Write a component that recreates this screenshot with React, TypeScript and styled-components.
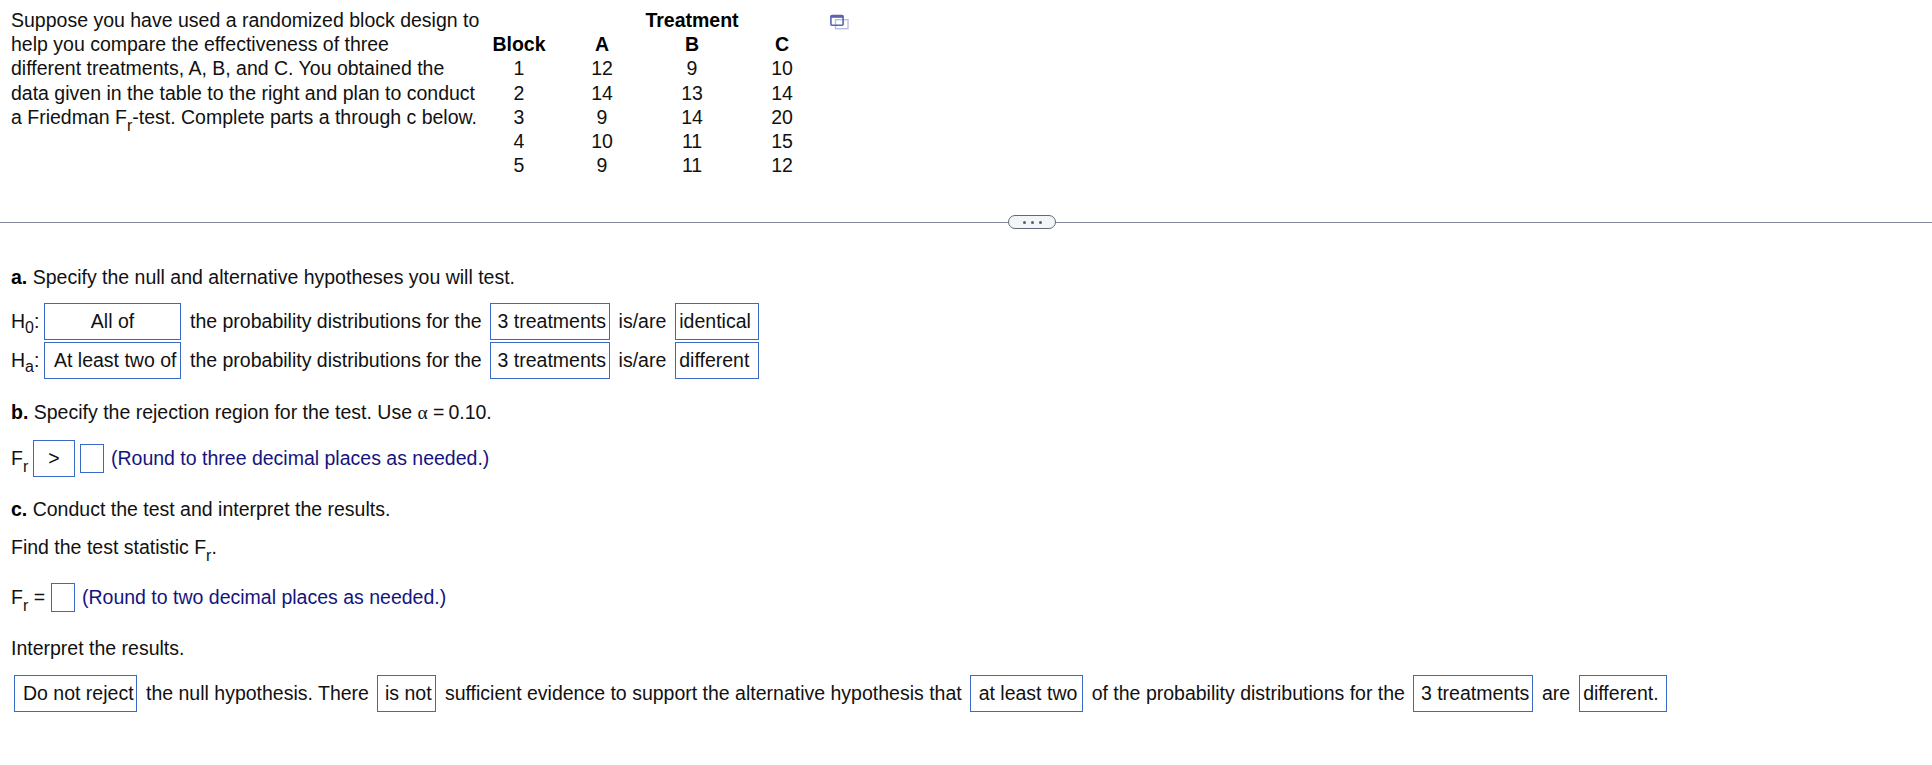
import React from 'react'
import styled, { createGlobalStyle } from 'styled-components'

const GlobalStyle = createGlobalStyle`
  html, body {
    margin: 0;
    padding: 0;
    background: #fff;
  }
  body {
    font-family: "Liberation Sans", Arial, sans-serif;
    font-size: 19.5px;
    color: #111;
  }
`

const Page = styled.div`
  width: 1932px;
  height: 765px;
  overflow: hidden;
`

const Top = styled.div`
  display: flex;
  align-items: flex-start;
  height: 215px;
  padding: 8px 0 0 11px;
  box-sizing: border-box;
`

const Intro = styled.div`
  width: 470px;
  flex: none;
  line-height: 24.2px;
  white-space: nowrap;
`

const Table = styled.div`
  display: grid;
  grid-template-columns: 76px 90px 90px 90px;
  grid-auto-rows: 24.2px;
  line-height: 24.2px;
  text-align: center;
`

const Head = styled.div<{ $span?: number; $start?: number }>`
  font-weight: bold;
  color: #000;
  ${(p) => p.$start && `grid-column: ${p.$start} / span ${p.$span || 1};`}
`

const WindowIcon = styled.svg`
  margin: 6px 0 0 3px;
  flex: none;
`

const Divider = styled.div`
  display: flex;
  align-items: center;
  height: 14px;
`

const Rule = styled.div<{ $w?: number }>`
  height: 1px;
  background: #858a9e;
  ${(p) => (p.$w ? `width: ${p.$w}px;` : 'flex: 1;')}
`

const Pill = styled.div`
  display: flex;
  align-items: center;
  justify-content: center;
  gap: 5px;
  width: 48px;
  height: 14px;
  box-sizing: border-box;
  border: 1px solid #5f6b7a;
  border-radius: 7px;
  background: #f3f5f8;
`

const Dot = styled.span`
  width: 3px;
  height: 3px;
  border-radius: 50%;
  background: #555f6e;
`

const Body = styled.div`
  padding: 0 0 0 11px;
`

const Line = styled.div<{ $top: number }>`
  margin-top: ${(p) => p.$top}px;
  line-height: 24px;
`

const Row = styled.div<{ $top: number; $h?: number }>`
  display: flex;
  align-items: center;
  height: ${(p) => p.$h || 37}px;
  margin-top: ${(p) => p.$top}px;
  white-space: pre;
`

const Part = styled.b`
  color: #000;
`

const Sub = styled.sub<{ $drop?: number }>`
  font-size: 16px;
  line-height: 0;
  vertical-align: -${(p) => p.$drop || 7}px;
`

const Greek = styled.span`
  font-family: "Liberation Serif", "Times New Roman", serif;
`

const Symbol = styled.span<{ $w: number }>`
  display: inline-block;
  width: ${(p) => p.$w}px;
  flex: none;
`

const Answer = styled.span<{ $w: number; $pad?: number; $center?: boolean; $left?: number; $right?: number }>`
  display: inline-flex;
  align-items: center;
  justify-content: ${(p) => (p.$center ? 'center' : 'flex-start')};
  flex: none;
  box-sizing: border-box;
  width: ${(p) => p.$w}px;
  height: 37px;
  padding-left: ${(p) => p.$pad || 0}px;
  margin-left: ${(p) => p.$left || 0}px;
  margin-right: ${(p) => p.$right || 0}px;
  border: 1px solid #3b69c6;
`

const Blank = styled.span<{ $left?: number; $right?: number }>`
  display: inline-block;
  flex: none;
  box-sizing: border-box;
  width: 24px;
  height: 29px;
  margin-left: ${(p) => p.$left || 0}px;
  margin-right: ${(p) => p.$right || 0}px;
  border: 1px solid #3b69c6;
`

const Note = styled.span`
  color: #14147f;
`

const rows = [
  [1, 12, 9, 10],
  [2, 14, 13, 14],
  [3, 9, 14, 20],
  [4, 10, 11, 15],
  [5, 9, 11, 12],
]

export default function App() {
  return (
    <Page>
      <GlobalStyle />
      <Top>
        <Intro>
          Suppose you have used a randomized block design to
          <br />
          help you compare the effectiveness of three
          <br />
          different treatments, A, B, and C. You obtained the
          <br />
          data given in the table to the right and plan to conduct
          <br />a Friedman F<Sub>r</Sub>-test. Complete parts a through c below.
        </Intro>
        <Table>
          <Head $start={2} $span={3}>Treatment</Head>
          <Head>Block</Head>
          <Head>A</Head>
          <Head>B</Head>
          <Head>C</Head>
          {rows.flat().map((v, i) => (
            <div key={i}>{v}</div>
          ))}
        </Table>
        <WindowIcon width="19" height="17" viewBox="0 0 19 17">
          <rect x="5.5" y="5.7" width="12.5" height="9" fill="#fff" stroke="#b9bee0" strokeWidth="1.4" />
          <rect x="0.9" y="1.5" width="12.2" height="9.8" rx="1" fill="none" stroke="#5a64ad" strokeWidth="1.6" />
          <rect x="0.9" y="1" width="12.2" height="2.8" fill="#5a64ad" />
        </WindowIcon>
      </Top>
      <Divider>
        <Rule $w={1008} />
        <Pill>
          <Dot />
          <Dot />
          <Dot />
        </Pill>
        <Rule />
      </Divider>
      <Body>
        <Line $top={36}>
          <Part>a.</Part> Specify the null and alternative hypotheses you will test.
        </Line>
        <Row $top={14}>
          <Symbol $w={33}>H<Sub $drop={5}>0</Sub>:</Symbol>
          <Answer $w={137} $center $right={9}>All of</Answer>
          the probability distributions for the
          <Answer $w={120} $pad={7} $left={8} $right={9}>3 treatments</Answer>
          is/are
          <Answer $w={84} $pad={3} $left={9}>identical</Answer>
        </Row>
        <Row $top={2}>
          <Symbol $w={33}>H<Sub $drop={5}>a</Sub>:</Symbol>
          <Answer $w={137} $pad={9} $right={9}>At least two of</Answer>
          the probability distributions for the
          <Answer $w={120} $pad={7} $left={8} $right={9}>3 treatments</Answer>
          is/are
          <Answer $w={84} $pad={3} $left={9}>different</Answer>
        </Row>
        <Line $top={21}>
          <Part>b.</Part> Specify the rejection region for the test. Use <Greek>α</Greek> =&thinsp;0.10.
        </Line>
        <Row $top={15}>
          <Symbol $w={22}>F<Sub>r</Sub></Symbol>
          <Answer $w={42} $center $right={5}>&gt;</Answer>
          <Blank $right={7} />
          <Note>(Round to three decimal places as needed.)</Note>
        </Row>
        <Line $top={20}>
          <Part>c.</Part> Conduct the test and interpret the results.
        </Line>
        <Line $top={14}>
          Find the test statistic F<Sub>r</Sub>.
        </Line>
        <Row $top={24} $h={29}>
          <Symbol $w={40}>F<Sub>r</Sub> =</Symbol>
          <Blank $right={7} />
          <Note>(Round to two decimal places as needed.)</Note>
        </Row>
        <Line $top={24}>Interpret the results.</Line>
        <Row $top={15}>
          <Answer $w={123} $pad={8} $left={3} $right={9}>Do not reject</Answer>
          the null hypothesis. There
          <Answer $w={59} $pad={7} $left={8} $right={9}>is not</Answer>
          sufficient evidence to support the alternative hypothesis that
          <Answer $w={113} $pad={8} $left={8} $right={9}>at least two</Answer>
          of the probability distributions for the
          <Answer $w={120} $pad={7} $left={8} $right={9}>3 treatments</Answer>
          are
          <Answer $w={88} $pad={3} $left={9}>different.</Answer>
        </Row>
      </Body>
    </Page>
  )
}
